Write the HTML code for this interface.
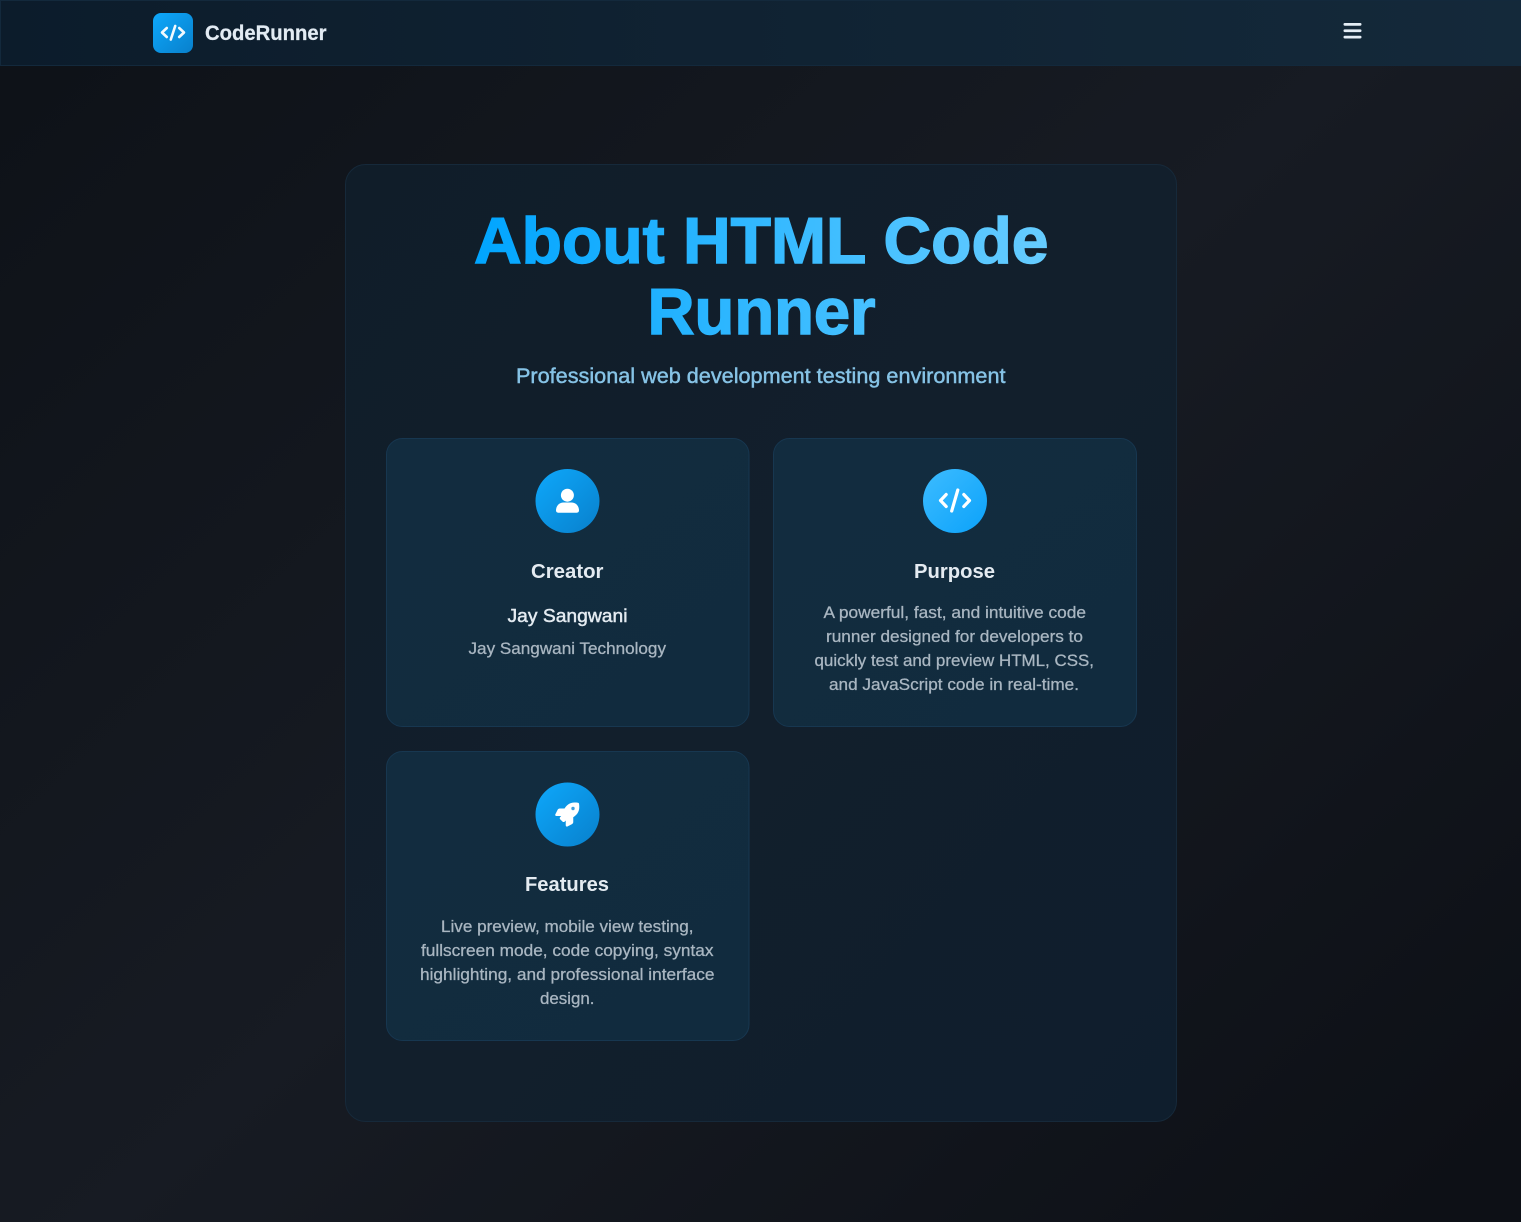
<!DOCTYPE html>
<html lang="en">
<head>
<meta charset="utf-8">
<title>About HTML Code Runner</title>
<style>
html,body{margin:0;padding:0;width:1521px;height:1222px;overflow:hidden;background:#0f1319}
svg{display:block;position:absolute;left:0;top:0}
text{font-family:"Liberation Sans",sans-serif;text-anchor:start}
.b{font-weight:700}
.sm{stroke-width:.45px}
.p{font-size:16.6px;fill:#a9b6c1;stroke:#a9b6c1;stroke-width:.28px}
</style>
</head>
<body>
<svg width="1521" height="1222" viewBox="0 0 1521 1222" xmlns="http://www.w3.org/2000/svg">
<defs>
<linearGradient id="bg" gradientUnits="userSpaceOnUse" x1="150" y1="-50" x2="1371" y2="1272">
<stop offset="0" stop-color="#0e1218"/><stop offset=".5" stop-color="#171b23"/><stop offset="1" stop-color="#0d1016"/>
</linearGradient>
<linearGradient id="nav" x1="0" y1="0" x2="1" y2="0">
<stop offset="0" stop-color="#0c1c2b"/><stop offset="1" stop-color="#14293a"/>
</linearGradient>
<linearGradient id="main" x1="0" y1="0" x2="1" y2="1">
<stop offset="0" stop-color="#101d29"/><stop offset=".5" stop-color="#121f2c"/><stop offset="1" stop-color="#0f1e2d"/>
</linearGradient>
<linearGradient id="card" x1="0" y1="0" x2="1" y2="1">
<stop offset="0" stop-color="#122c3f"/><stop offset="1" stop-color="#112b3e"/>
</linearGradient>
<linearGradient id="blue" x1="0" y1="0" x2="1" y2="1">
<stop offset="0" stop-color="#0ea8fb"/><stop offset="1" stop-color="#0880cc"/>
</linearGradient>
<linearGradient id="light" x1="0" y1="0" x2="1" y2="1">
<stop offset="0" stop-color="#3dbcff"/><stop offset="1" stop-color="#0ba2fa"/>
</linearGradient>
<linearGradient id="title" gradientUnits="userSpaceOnUse" x1="474" y1="0" x2="1048" y2="0">
<stop offset="0" stop-color="#00a5ff"/><stop offset="1" stop-color="#66ccff"/>
</linearGradient>
</defs>

<rect width="1521" height="1222" fill="url(#bg)"/>

<!-- navbar -->
<rect x="0" y="0" width="1521" height="66" fill="url(#nav)"/>
<rect x=".5" y=".5" width="1520" height="65" fill="none" stroke="#13293c" stroke-width="1"/>
<rect x="153" y="13" width="40" height="40" rx="8" fill="url(#blue)"/>
<g fill="none" stroke="#fff" stroke-width="2.6" stroke-linecap="round" stroke-linejoin="round" opacity=".95">
<path d="M166.800 28L162 32.500l4.800 4.500M179.200 28l4.800 4.500-4.800 4.500M175.200 26L170.800 39.500"/>
</g>
<text x="205" y="40" font-size="21.500" class="b" fill="#e2ebf3" stroke="#e2ebf3" stroke-width=".25" textLength="121.500" lengthAdjust="spacingAndGlyphs">CodeRunner</text>
<g fill="#e4edf5">
<rect x="1343.500" y="23" width="18" height="2.700" rx="1.200"/>
<rect x="1343.500" y="29.400" width="18" height="2.700" rx="1.200"/>
<rect x="1343.500" y="35.800" width="18" height="2.700" rx="1.200"/>
</g>

<!-- main panel -->
<rect x="345.500" y="164.500" width="831" height="957" rx="20" fill="url(#main)" stroke="#16293a"/>
<text x="474" y="263" font-size="65" class="b" fill="url(#title)" stroke="url(#title)" stroke-width="1.400" textLength="574.500" lengthAdjust="spacingAndGlyphs">About HTML Code</text>
<text x="647.500" y="334" font-size="65" class="b" fill="url(#title)" stroke="url(#title)" stroke-width="1.400" textLength="228" lengthAdjust="spacingAndGlyphs">Runner</text>
<text x="516" y="383" font-size="21.500" class="sm" fill="#86c3e6" stroke="#86c3e6" textLength="489.500" lengthAdjust="spacingAndGlyphs">Professional web development testing environment</text>

<!-- cards -->
<rect x="386.500" y="438.500" width="362.500" height="288" rx="16" fill="url(#card)" stroke="#173750"/>
<rect x="773.500" y="438.500" width="363" height="288" rx="16" fill="url(#card)" stroke="#173750"/>
<rect x="386.500" y="751.500" width="362.500" height="289" rx="16" fill="url(#card)" stroke="#173750"/>

<!-- creator -->
<circle cx="567.500" cy="501" r="32" fill="url(#blue)"/>
<circle cx="567.400" cy="495.200" r="6.500" fill="#fff"/>
<path fill="#fff" d="M556 510.500c0-4.700 3.300-8 7.500-8h8c4.200 0 7.500 3.300 7.500 8 0 1.300-.9 2.200-2.200 2.200h-18.600c-1.300 0-2.200-.9-2.200-2.200z"/>
<text x="531" y="578" font-size="20.500" class="b" fill="#e4ebf1" textLength="72.500" lengthAdjust="spacingAndGlyphs">Creator</text>
<text x="507.500" y="622" font-size="18.500" class="sm" fill="#e4ebf1" stroke="#e4ebf1" textLength="120" lengthAdjust="spacingAndGlyphs">Jay Sangwani</text>
<text x="468.500" y="654" class="p" textLength="197.500" lengthAdjust="spacingAndGlyphs">Jay Sangwani Technology</text>

<!-- purpose -->
<circle cx="955" cy="501" r="32" fill="url(#light)"/>
<g fill="none" stroke="#fff" stroke-width="3.200" stroke-linecap="round" stroke-linejoin="round">
<path d="M946.200 494.500l-5.700 6 5.700 6M963.800 494.500l5.700 6-5.700 6M957.800 490L951.700 511"/>
</g>
<text x="914" y="578" font-size="20.500" class="b" fill="#e4ebf1" textLength="81" lengthAdjust="spacingAndGlyphs">Purpose</text>
<text x="823.500" y="618" class="p" textLength="262.500" lengthAdjust="spacingAndGlyphs">A powerful, fast, and intuitive code</text>
<text x="826" y="642" class="p" textLength="257" lengthAdjust="spacingAndGlyphs">runner designed for developers to</text>
<text x="814.500" y="666" class="p" textLength="279.500" lengthAdjust="spacingAndGlyphs">quickly test and preview HTML, CSS,</text>
<text x="829" y="690" class="p" textLength="250" lengthAdjust="spacingAndGlyphs">and JavaScript code in real-time.</text>

<!-- features -->
<circle cx="567.500" cy="814.500" r="32" fill="url(#blue)"/>
<path transform="translate(555.200 802.500) scale(.047)" fill="#fff" d="M505.120 19.090c-1.190-5.530-6.660-11-12.210-12.190C460.720 0 435.510 0 410.410 0 307.180 0 245.270 55.200 199.050 128H94.840c-16.350.02-35.560 11.880-42.890 26.480L2.520 253.300A28.400 28.400 0 0 0 0 264a24.010 24.010 0 0 0 24.010 24h103.810l-22.470 22.470c-11.370 11.360-13 32.260 0 45.250l50.900 50.910c11.160 11.190 32.160 13.160 45.280 0l22.470-22.470V488a24.010 24.010 0 0 0 24.010 24 28.560 28.560 0 0 0 10.710-2.520l98.730-49.390c14.630-7.300 26.510-26.500 26.510-42.860V312.800c72.600-46.310 128.030-108.410 128.030-211.100.02-25.200.02-50.400-6.950-82.610z"/>
<circle cx="573" cy="808.500" r="1.700" fill="#3f9fdc"/>
<text x="525" y="891" font-size="20.500" class="b" fill="#e4ebf1" textLength="84" lengthAdjust="spacingAndGlyphs">Features</text>
<text x="441" y="932" class="p" textLength="252.500" lengthAdjust="spacingAndGlyphs">Live preview, mobile view testing,</text>
<text x="421" y="956" class="p" textLength="292.500" lengthAdjust="spacingAndGlyphs">fullscreen mode, code copying, syntax</text>
<text x="420" y="980" class="p" textLength="294.500" lengthAdjust="spacingAndGlyphs">highlighting, and professional interface</text>
<text x="540" y="1004" class="p" textLength="54.500" lengthAdjust="spacingAndGlyphs">design.</text>
</svg>
</body>
</html>
